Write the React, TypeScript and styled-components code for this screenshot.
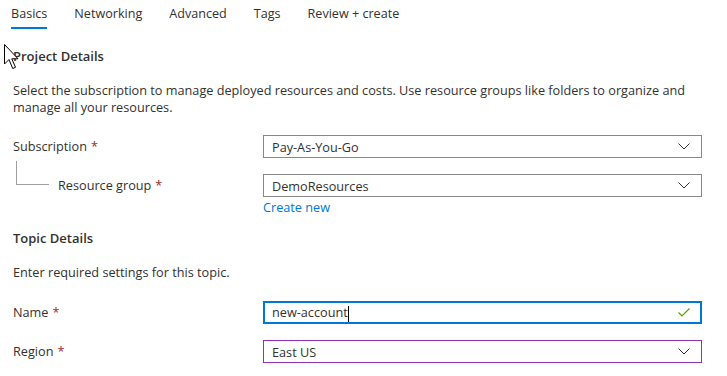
import React from "react";
import styled, { createGlobalStyle } from "styled-components";

const GlobalStyle = createGlobalStyle`
  body {
    margin: 0;
    background: #ffffff;
    font-family: "Open Sans", "Noto Sans", sans-serif;
    color: #323130;
  }
`;

const Page = styled.div`
  position: relative;
  width: 727px;
  height: 376px;
  overflow: hidden;
  padding: 0 0 0 11px;
  box-sizing: border-box;
`;

const TabBar = styled.div`
  display: flex;
  gap: 23px;
  height: 31px;
`;

const Tab = styled.div<{ $active?: boolean }>`
  font-size: 12.6px;
  line-height: 28px;
  height: 29px;
  color: #323130;
  border-bottom: 2px solid ${(p) => (p.$active ? "#0078d4" : "transparent")};
  box-sizing: border-box;
  margin-right: 4px;
`;

const Body = styled.div`
  padding-left: 2px;
`;

const SectionTitle = styled.div<{ $top: number }>`
  font-size: 13px;
  font-weight: 600;
  line-height: 18px;
  margin-top: ${(p) => p.$top}px;
`;

const Description = styled.p<{ $top: number }>`
  font-size: 12.7px;
  line-height: 17px;
  margin: ${(p) => p.$top}px 0 0;
  width: 700px;
`;

const Form = styled.div`
  display: grid;
  grid-template-columns: 250px 439px;
  align-items: center;
`;

const Label = styled.div<{ $indent?: boolean }>`
  font-size: 12.7px;
  position: relative;
  padding-left: ${(p) => (p.$indent ? "45px" : "0")};
  height: 23px;
  line-height: 23px;
`;

const Star = styled.span`
  color: #a4262c;
  margin-left: 4px;
`;

const TreeLine = styled.span`
  position: absolute;
  left: 3px;
  top: -13px;
  width: 32px;
  height: 23px;
  border-left: 1px solid #a19f9d;
  border-bottom: 1px solid #a19f9d;
`;

const Field = styled.div<{ $border: string; $width?: number }>`
  box-sizing: border-box;
  height: 23px;
  border: ${(p) => p.$width ?? 1}px solid ${(p) => p.$border};
  display: flex;
  align-items: center;
  justify-content: space-between;
  padding: 0 ${(p) => 12 - (p.$width ?? 1)}px 0 ${(p) => 9 - (p.$width ?? 1)}px;
  font-size: 12.7px;
  color: #323130;
`;

const Caret = styled.span`
  display: inline-block;
  width: 1px;
  height: 16px;
  background: #000;
  vertical-align: middle;
`;

const LinkText = styled.a`
  color: #0078d4;
  font-size: 12.7px;
  text-decoration: none;
  line-height: 17px;
`;

const Row = styled.div<{ $top: number }>`
  display: contents;
  & > * {
    margin-top: ${(p) => p.$top}px;
  }
`;

const Cursor = styled.svg`
  position: absolute;
  left: 4px;
  top: 44px;
`;

const Chevron = () => (
  <svg width="12" height="7" viewBox="0 0 12 7">
    <path d="M0.5 0.5 L6 6 L11.5 0.5" fill="none" stroke="#323130" strokeWidth="1" />
  </svg>
);

const Check = () => (
  <svg width="12" height="9" viewBox="0 0 12 9">
    <path d="M0.5 4.5 L4 8 L11.5 0.5" fill="none" stroke="#57a300" strokeWidth="1.2" />
  </svg>
);

export default function App() {
  return (
    <>
      <GlobalStyle />
      <Page>
        <TabBar>
          <Tab $active>Basics</Tab>
          <Tab>Networking</Tab>
          <Tab>Advanced</Tab>
          <Tab>Tags</Tab>
          <Tab>Review + create</Tab>
        </TabBar>
        <Body>
          <SectionTitle $top={16}>Project Details</SectionTitle>
          <Description $top={17}>
            Select the subscription to manage deployed resources and costs. Use resource groups like folders to organize and manage all your resources.
          </Description>
          <Form>
            <Row $top={19}>
              <Label>
                Subscription<Star>*</Star>
              </Label>
              <Field $border="#8a8886">
                Pay-As-You-Go
                <Chevron />
              </Field>
            </Row>
            <Row $top={16}>
              <Label $indent>
                <TreeLine />
                Resource group<Star>*</Star>
              </Label>
              <Field $border="#8a8886">
                DemoResources
                <Chevron />
              </Field>
            </Row>
            <Row $top={2}>
              <div />
              <LinkText href="#">Create new</LinkText>
            </Row>
          </Form>
          <SectionTitle $top={13}>Topic Details</SectionTitle>
          <Description $top={17}>Enter required settings for this topic.</Description>
          <Form>
            <Row $top={20}>
              <Label>
                Name<Star>*</Star>
              </Label>
              <Field $border="#0078d4" $width={2}>
                <span>
                  new-account
                  <Caret />
                </span>
                <Check />
              </Field>
            </Row>
            <Row $top={16}>
              <Label>
                Region<Star>*</Star>
              </Label>
              <Field $border="#9131b0">
                East US
                <Chevron />
              </Field>
            </Row>
          </Form>
        </Body>
        <Cursor width="15" height="28" viewBox="0 0 15 28">
          <path d="M0.5 0.5 L0.5 20 L5 15.5 L8.7 24.5 L11.5 23.3 L7.8 14.8 L14 14.8 Z" fill="#fff" stroke="#000" strokeWidth="1" />
        </Cursor>
      </Page>
    </>
  );
}
